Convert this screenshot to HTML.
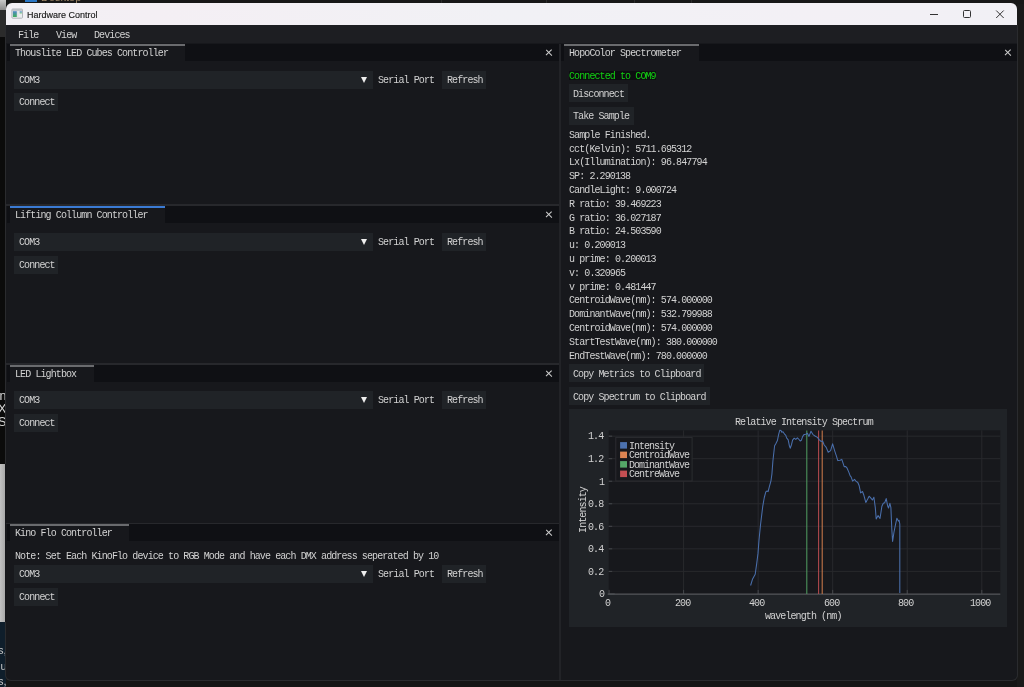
<!DOCTYPE html>
<html><head><meta charset="utf-8"><title>Hardware Control</title>
<style>
html,body{-webkit-font-smoothing:antialiased;margin:0;padding:0;width:1024px;height:687px;overflow:hidden;background:#151515}
body>div,#chart>div{position:absolute}
.m{will-change:transform;font-family:"Liberation Mono",monospace;font-size:10px;line-height:10px;letter-spacing:-0.9px;white-space:pre}
.s{will-change:transform;font-family:"Liberation Sans",sans-serif;white-space:pre}
.x{width:6.2px;height:6.2px}
.x::before,.x::after{content:"";position:absolute;left:-0.75px;top:2.3px;width:7.5px;height:1.35px;background:#d0d0d0;transform:rotate(45deg)}
.x::after{transform:rotate(-45deg)}
.arr{width:0;height:0;border-left:3.4px solid transparent;border-right:3.4px solid transparent;border-top:6px solid #eee}
svg{position:absolute;left:0;top:0}
</style></head><body>
<div style="left:0px;top:0px;width:1024.00px;height:687.00px;background:#151515;"></div>
<div style="left:0px;top:0px;width:6.00px;height:10.00px;background:linear-gradient(#c8c8c8,#8a8a8a);"></div>
<div style="left:0px;top:10px;width:6.00px;height:27.00px;background:#2b2b2b;"></div>
<div style="left:0px;top:37px;width:6.00px;height:427.00px;background:#0b0b0b;"></div>
<div style="left:0px;top:464px;width:6.00px;height:158.00px;background:linear-gradient(90deg,#c2c2c2,#a4a4a4);"></div>
<div style="left:0px;top:622px;width:6.00px;height:65.00px;background:#0f1e2b;"></div>
<div style="left:1017px;top:0px;width:7.00px;height:687.00px;background:#191919;"></div>
<div style="left:6px;top:0px;width:1018.00px;height:3.50px;background:#171717;"></div>
<div style="left:25px;top:0px;width:12.00px;height:2.40px;background:#2a76c4;"></div>
<div class="s" style="left:41px;top:-7.8px;font-size:11px;line-height:10px;color:#9a8566">Desktop</div>
<div style="left:441px;top:0px;width:1.00px;height:3.00px;background:#2a2a2a;"></div>
<div style="left:546px;top:0px;width:1.00px;height:3.00px;background:#2a2a2a;"></div>
<div style="left:634px;top:0px;width:1.00px;height:3.00px;background:#2a2a2a;"></div>
<div style="left:691px;top:0px;width:1.00px;height:3.00px;background:#2a2a2a;"></div>
<div style="left:0;top:385px;width:5.8px;height:50px;overflow:hidden"><div class="s" style="position:absolute;right:-0.5px;top:4.5px;font-size:12.5px;line-height:12.8px;color:#d6d6d6;text-align:right">n<br>X<br>S</div></div>
<div style="left:0;top:640px;width:5.8px;height:47px;overflow:hidden"><div class="s" style="position:absolute;right:-1px;top:3px;font-size:11px;line-height:15.5px;color:#c8c8c8;text-align:right">s,<br>u<br>s,</div></div>
<div style="left:5px;top:25px;width:1013.00px;height:656.00px;background:#2a2b2e;border-radius:0 0 6px 6px;"></div>
<div style="left:5px;top:464px;width:1.20px;height:158.00px;background:#15161a;"></div>
<div style="left:6px;top:25px;width:1011.00px;height:655.00px;background:#17181c;border-radius:0 0 5px 5px;"></div>
<div style="left:6px;top:3px;width:1011.00px;height:22.40px;background:linear-gradient(90deg,#f2f0f4 0%,#f4eff4 15%,#f1f1f5 50%,#f3f0f5 80%,#f1f0f5 100%);border-radius:6px 6px 0 0;"></div>
<div style="left:6px;top:25.4px;width:1011.00px;height:18.00px;background:#1d1e22;"></div>
<div class="m" style="left:18.1px;top:31.00px;color:#d2d2d2;">File</div>
<div class="m" style="left:55.6px;top:31.00px;color:#d2d2d2;">View</div>
<div class="m" style="left:93.9px;top:31.00px;color:#d2d2d2;">Devices</div>
<div style="left:559px;top:43.5px;width:2.00px;height:636.50px;background:#222327;"></div>
<div style="left:6.5px;top:44px;width:552.00px;height:17.00px;background:#0f1014;"></div>
<div style="left:10px;top:44px;width:175.00px;height:17.00px;background:#17181c;"></div>
<div style="left:10px;top:44px;width:175.00px;height:2.00px;background:#6a6b6e;"></div>
<div class="m" style="left:14.8px;top:49.00px;color:#d2d2d2;">Thouslite LED Cubes Controller</div>
<div class="x" style="left:546px;top:49.8px"></div>
<div style="left:14.2px;top:70.8px;width:358.50px;height:18.00px;background:#202327;"></div>
<div class="m" style="left:19.2px;top:76.00px;color:#d2d2d2;">COM3</div>
<div class="arr" style="left:360.6px;top:76.8px"></div>
<div class="m" style="left:377.8px;top:76.00px;color:#d2d2d2;">Serial Port</div>
<div style="left:442.2px;top:70.8px;width:44.00px;height:18.00px;background:#202327;"></div>
<div class="m" style="left:446.6px;top:76.00px;color:#d2d2d2;">Refresh</div>
<div style="left:14.2px;top:93px;width:44.30px;height:18.00px;background:#202327;"></div>
<div class="m" style="left:19.0px;top:98.20px;color:#d2d2d2;">Connect</div>
<div style="left:6px;top:204px;width:553.00px;height:2.00px;background:#27282c;"></div>
<div style="left:6.5px;top:206px;width:552.00px;height:17.00px;background:#0f1014;"></div>
<div style="left:10px;top:206px;width:155.00px;height:17.00px;background:#17181c;"></div>
<div style="left:10px;top:206px;width:155.00px;height:2.00px;background:#3b7bd4;"></div>
<div class="m" style="left:14.8px;top:211.00px;color:#d2d2d2;">Lifting Collumn Controller</div>
<div class="x" style="left:546px;top:211.8px"></div>
<div style="left:14.2px;top:233px;width:358.50px;height:18.00px;background:#202327;"></div>
<div class="m" style="left:19.2px;top:238.20px;color:#d2d2d2;">COM3</div>
<div class="arr" style="left:360.6px;top:239px"></div>
<div class="m" style="left:377.8px;top:238.20px;color:#d2d2d2;">Serial Port</div>
<div style="left:442.2px;top:233px;width:44.00px;height:18.00px;background:#202327;"></div>
<div class="m" style="left:446.6px;top:238.20px;color:#d2d2d2;">Refresh</div>
<div style="left:14.2px;top:255.5px;width:44.30px;height:18.00px;background:#202327;"></div>
<div class="m" style="left:19.0px;top:260.70px;color:#d2d2d2;">Connect</div>
<div style="left:6px;top:363px;width:553.00px;height:1.50px;background:#27282c;"></div>
<div style="left:6.5px;top:364.5px;width:552.00px;height:17.00px;background:#0f1014;"></div>
<div style="left:10px;top:364.5px;width:84.00px;height:17.00px;background:#17181c;"></div>
<div style="left:10px;top:364.5px;width:84.00px;height:2.00px;background:#6a6b6e;"></div>
<div class="m" style="left:14.8px;top:369.50px;color:#d2d2d2;">LED Lightbox</div>
<div class="x" style="left:546px;top:370.3px"></div>
<div style="left:14.2px;top:391px;width:358.50px;height:18.00px;background:#202327;"></div>
<div class="m" style="left:19.2px;top:396.20px;color:#d2d2d2;">COM3</div>
<div class="arr" style="left:360.6px;top:397px"></div>
<div class="m" style="left:377.8px;top:396.20px;color:#d2d2d2;">Serial Port</div>
<div style="left:442.2px;top:391px;width:44.00px;height:18.00px;background:#202327;"></div>
<div class="m" style="left:446.6px;top:396.20px;color:#d2d2d2;">Refresh</div>
<div style="left:14.2px;top:413.5px;width:44.30px;height:18.00px;background:#202327;"></div>
<div class="m" style="left:19.0px;top:418.70px;color:#d2d2d2;">Connect</div>
<div style="left:6px;top:522.5px;width:553.00px;height:1.50px;background:#27282c;"></div>
<div style="left:6.5px;top:524px;width:552.00px;height:17.00px;background:#0f1014;"></div>
<div style="left:10px;top:524px;width:119.40px;height:17.00px;background:#17181c;"></div>
<div style="left:10px;top:524px;width:119.40px;height:2.00px;background:#6a6b6e;"></div>
<div class="m" style="left:14.8px;top:529.00px;color:#d2d2d2;">Kino Flo Controller</div>
<div class="x" style="left:546px;top:529.8px"></div>
<div class="m" style="left:14.8px;top:551.60px;color:#d2d2d2;">Note: Set Each KinoFlo device to RGB Mode and have each DMX address seperated by 10</div>
<div style="left:14.2px;top:565.2px;width:358.50px;height:18.00px;background:#202327;"></div>
<div class="m" style="left:19.2px;top:570.40px;color:#d2d2d2;">COM3</div>
<div class="arr" style="left:360.6px;top:571.2px"></div>
<div class="m" style="left:377.8px;top:570.40px;color:#d2d2d2;">Serial Port</div>
<div style="left:442.2px;top:565.2px;width:44.00px;height:18.00px;background:#202327;"></div>
<div class="m" style="left:446.6px;top:570.40px;color:#d2d2d2;">Refresh</div>
<div style="left:14.2px;top:587.6px;width:44.30px;height:18.00px;background:#202327;"></div>
<div class="m" style="left:19.0px;top:592.80px;color:#d2d2d2;">Connect</div>
<div style="left:561px;top:44px;width:455.50px;height:17.00px;background:#0f1014;"></div>
<div style="left:564px;top:44px;width:135.00px;height:17.00px;background:#17181c;"></div>
<div style="left:564px;top:44px;width:135.00px;height:2.00px;background:#6a6b6e;"></div>
<div class="m" style="left:568.8px;top:49.00px;color:#d2d2d2;">HopoColor Spectrometer</div>
<div class="x" style="left:1004.5px;top:49.8px"></div>
<div style="left:568.8px;top:70.8px;width:86.90px;height:9.00px;background:#0d0e10;"></div>
<div class="m" style="left:568.8px;top:71.80px;color:#12d012;">Connected to COM9</div>
<div style="left:568.8px;top:84.3px;width:59.20px;height:17.90px;background:#202327;"></div>
<div class="m" style="left:573.4px;top:90.10px;color:#d2d2d2;">Disconnect</div>
<div style="left:568.8px;top:107px;width:64.80px;height:17.60px;background:#202327;"></div>
<div class="m" style="left:573.4px;top:112.40px;color:#d2d2d2;">Take Sample</div>
<div class="m" style="left:568.8px;top:130.80px;color:#d2d2d2;">Sample Finished.</div>
<div class="m" style="left:568.8px;top:144.60px;color:#d2d2d2;">cct(Kelvin): 5711.695312</div>
<div class="m" style="left:568.8px;top:158.40px;color:#d2d2d2;">Lx(Illumination): 96.847794</div>
<div class="m" style="left:568.8px;top:172.20px;color:#d2d2d2;">SP: 2.290138</div>
<div class="m" style="left:568.8px;top:186.00px;color:#d2d2d2;">CandleLight: 9.000724</div>
<div class="m" style="left:568.8px;top:199.80px;color:#d2d2d2;">R ratio: 39.469223</div>
<div class="m" style="left:568.8px;top:213.60px;color:#d2d2d2;">G ratio: 36.027187</div>
<div class="m" style="left:568.8px;top:227.40px;color:#d2d2d2;">B ratio: 24.503590</div>
<div class="m" style="left:568.8px;top:241.20px;color:#d2d2d2;">u: 0.200013</div>
<div class="m" style="left:568.8px;top:255.00px;color:#d2d2d2;">u prime: 0.200013</div>
<div class="m" style="left:568.8px;top:268.80px;color:#d2d2d2;">v: 0.320965</div>
<div class="m" style="left:568.8px;top:282.60px;color:#d2d2d2;">v prime: 0.481447</div>
<div class="m" style="left:568.8px;top:296.40px;color:#d2d2d2;">CentroidWave(nm): 574.000000</div>
<div class="m" style="left:568.8px;top:310.20px;color:#d2d2d2;">DominantWave(nm): 532.799988</div>
<div class="m" style="left:568.8px;top:324.00px;color:#d2d2d2;">CentroidWave(nm): 574.000000</div>
<div class="m" style="left:568.8px;top:337.80px;color:#d2d2d2;">StartTestWave(nm): 380.000000</div>
<div class="m" style="left:568.8px;top:351.60px;color:#d2d2d2;">EndTestWave(nm): 780.000000</div>
<div style="left:568.8px;top:364.3px;width:135.70px;height:17.50px;background:#202327;"></div>
<div class="m" style="left:573.4px;top:370.20px;color:#d2d2d2;">Copy Metrics to Clipboard</div>
<div style="left:568.8px;top:387px;width:141.00px;height:17.60px;background:#202327;"></div>
<div class="m" style="left:573.4px;top:392.90px;color:#d2d2d2;">Copy Spectrum to Clipboard</div>
<div style="left:568.8px;top:408.7px;width:438.30px;height:218.30px;background:#202327;"></div>
<svg width="1024" height="687" viewBox="0 0 1024 687">
<rect x="608.7" y="430.4" width="391.60" height="163.50" fill="#17181c"/>
<line x1="683.60" y1="430.4" x2="683.60" y2="593.9" stroke="#28292d" stroke-width="1"/>
<line x1="758.15" y1="430.4" x2="758.15" y2="593.9" stroke="#28292d" stroke-width="1"/>
<line x1="832.70" y1="430.4" x2="832.70" y2="593.9" stroke="#28292d" stroke-width="1"/>
<line x1="907.25" y1="430.4" x2="907.25" y2="593.9" stroke="#28292d" stroke-width="1"/>
<line x1="981.80" y1="430.4" x2="981.80" y2="593.9" stroke="#28292d" stroke-width="1"/>
<line x1="608.7" y1="571.37" x2="1000.3" y2="571.37" stroke="#28292d" stroke-width="1"/>
<line x1="608.7" y1="548.83" x2="1000.3" y2="548.83" stroke="#28292d" stroke-width="1"/>
<line x1="608.7" y1="526.30" x2="1000.3" y2="526.30" stroke="#28292d" stroke-width="1"/>
<line x1="608.7" y1="503.76" x2="1000.3" y2="503.76" stroke="#28292d" stroke-width="1"/>
<line x1="608.7" y1="481.23" x2="1000.3" y2="481.23" stroke="#28292d" stroke-width="1"/>
<line x1="608.7" y1="458.70" x2="1000.3" y2="458.70" stroke="#28292d" stroke-width="1"/>
<line x1="608.7" y1="436.16" x2="1000.3" y2="436.16" stroke="#28292d" stroke-width="1"/>
<line x1="608.7" y1="593.90" x2="614.7" y2="593.90" stroke="#45474b" stroke-width="1"/>
<line x1="608.7" y1="571.37" x2="612.2" y2="571.37" stroke="#45474b" stroke-width="1"/>
<line x1="608.7" y1="548.83" x2="612.2" y2="548.83" stroke="#45474b" stroke-width="1"/>
<line x1="608.7" y1="526.30" x2="612.2" y2="526.30" stroke="#45474b" stroke-width="1"/>
<line x1="608.7" y1="503.76" x2="612.2" y2="503.76" stroke="#45474b" stroke-width="1"/>
<line x1="608.7" y1="481.23" x2="612.2" y2="481.23" stroke="#45474b" stroke-width="1"/>
<line x1="608.7" y1="458.70" x2="612.2" y2="458.70" stroke="#45474b" stroke-width="1"/>
<line x1="608.7" y1="436.16" x2="612.2" y2="436.16" stroke="#45474b" stroke-width="1"/>
<line x1="609.05" y1="589.9" x2="609.05" y2="593.9" stroke="#45474b" stroke-width="1"/>
<line x1="683.60" y1="589.9" x2="683.60" y2="593.9" stroke="#45474b" stroke-width="1"/>
<line x1="758.15" y1="589.9" x2="758.15" y2="593.9" stroke="#45474b" stroke-width="1"/>
<line x1="832.70" y1="589.9" x2="832.70" y2="593.9" stroke="#45474b" stroke-width="1"/>
<line x1="907.25" y1="589.9" x2="907.25" y2="593.9" stroke="#45474b" stroke-width="1"/>
<line x1="981.80" y1="589.9" x2="981.80" y2="593.9" stroke="#45474b" stroke-width="1"/>
<line x1="607.7" y1="594.1999999999999" x2="1000.3" y2="594.1999999999999" stroke="#55575b" stroke-width="1.2"/>
<line x1="806.8" y1="430.4" x2="806.8" y2="593.9" stroke="#4f9a60" stroke-width="1.05"/>
<line x1="818.6" y1="430.4" x2="818.6" y2="593.9" stroke="#b44a4e" stroke-width="1.05"/>
<line x1="822.2" y1="430.4" x2="822.2" y2="593.9" stroke="#cc7a4c" stroke-width="1.05"/>
<polyline points="750.6,585.5 752.6,578.9 755.2,574.3 756.7,563.6 758.0,553.4 759.0,540 760.5,525 762.7,506.7 764.3,497.5 765.8,491.9 766.8,491.1 768.1,491.6 769.3,486.8 770.9,481.2 771.9,474.1 772.9,461 774.6,445.8 775.8,443.8 777.4,440.6 778.6,434.6 779.8,430.2 781.0,430.6 781.8,432.2 783.0,431.8 784.6,434.2 785.8,435.4 786.6,437.8 788.2,439.8 789.4,445.8 790.2,448.2 791.4,445 792.6,440.2 794.2,438.2 795.8,439.4 797.4,437.8 798.6,439 800.2,441 801.4,440.2 802.6,436.6 804.2,434.4 805.8,434.2 807.4,433.2 809.0,436.4 811.0,431.3 813.0,434.6 815.4,436.2 817.4,437.4 819.4,439.8 821.0,441.4 822.6,441 824.2,445 826.2,447.4 828.2,452.2 830.6,450.6 832.6,443.8 834.6,450.6 836.2,455.4 837.8,460.6 840.2,460.2 841.8,459.4 844.2,466.6 845.8,466.6 846.9,467.8 848.8,472.1 850.2,475.9 851.1,476.8 852.6,481.1 854.5,479.4 855.9,481.1 857.8,482.5 859.2,485.8 860.6,492.9 862.5,491.5 863.9,495.3 865.8,502.4 867.7,499.1 869.1,496.2 870.5,497.6 872.4,500 873.9,497.2 875.3,507.6 876.2,518.9 878.1,515.6 880.0,518.5 881.9,506.2 883.3,503.3 884.7,502.8 886.2,498.6 887.6,505.7 888.5,508 889.9,503.3 890.9,507.6 891.8,529.1 892.6,541.5 894.0,532 895.5,524.7 896.9,518.2 898.4,521.1 899.1,520.4 899.8,524 899.8,593" fill="none" stroke="#4a6fac" stroke-width="1.05" stroke-linejoin="round"/>
<rect x="615.8" y="437.4" width="76.3" height="43.6" fill="#17181c" stroke="#2c2d31" stroke-width="1"/>
<rect x="620.1" y="442.10" width="6.9" height="6.5" fill="#4c72b0"/>
<rect x="620.1" y="451.60" width="6.9" height="6.5" fill="#dd8452"/>
<rect x="620.1" y="461.10" width="6.9" height="6.5" fill="#55a868"/>
<rect x="620.1" y="470.60" width="6.9" height="6.5" fill="#c44e52"/>
</svg>
<div class="m" style="left:629.2px;top:441.60px;color:#d2d2d2;letter-spacing:-1px">Intensity</div><div class="m" style="left:629.2px;top:451.10px;color:#d2d2d2;letter-spacing:-1px">CentroidWave</div><div class="m" style="left:629.2px;top:460.60px;color:#d2d2d2;letter-spacing:-1px">DominantWave</div><div class="m" style="left:629.2px;top:470.10px;color:#d2d2d2;letter-spacing:-1px">CentreWave</div><div class="m" style="left:735.4px;top:417.60px;color:#d2d2d2;">Relative Intensity Spectrum</div><div class="m" style="left:765.1px;top:612.20px;color:#d2d2d2;">wavelength (nm)</div><div class="m" style="left:605.3px;top:599.20px;color:#d2d2d2;">0</div><div class="m" style="left:674.7499999999999px;top:599.20px;color:#d2d2d2;">200</div><div class="m" style="left:749.3px;top:599.20px;color:#d2d2d2;">400</div><div class="m" style="left:823.8499999999999px;top:599.20px;color:#d2d2d2;">600</div><div class="m" style="left:898.4px;top:599.20px;color:#d2d2d2;">800</div><div class="m" style="left:970.3999999999999px;top:599.20px;color:#d2d2d2;">1000</div><div class="m" style="left:598.5px;top:590.20px;color:#d2d2d2;">0</div><div class="m" style="left:588.3000000000001px;top:567.67px;color:#d2d2d2;">0.2</div><div class="m" style="left:588.3000000000001px;top:545.13px;color:#d2d2d2;">0.4</div><div class="m" style="left:588.3000000000001px;top:522.60px;color:#d2d2d2;">0.6</div><div class="m" style="left:588.3000000000001px;top:500.06px;color:#d2d2d2;">0.8</div><div class="m" style="left:598.5px;top:477.53px;color:#d2d2d2;">1</div><div class="m" style="left:588.3000000000001px;top:455.00px;color:#d2d2d2;">1.2</div><div class="m" style="left:588.3000000000001px;top:432.46px;color:#d2d2d2;">1.4</div><div class="m" style="left:558px;top:506px;width:50px;text-align:center;color:#d2d2d2;transform:rotate(-90deg);transform-origin:25px 4px">Intensity</div>
<div class="s" style="left:26.6px;top:9.5px;font-size:9px;line-height:10px;color:#1a1a1a;-webkit-text-stroke:0.15px #1a1a1a">Hardware Control</div>
<svg width="1024" height="30" viewBox="0 0 1024 30" style="position:absolute;left:0;top:0"><defs><linearGradient id="ig" x1="0" y1="0" x2="0" y2="1"><stop offset="0" stop-color="#4f86c8"/><stop offset="1" stop-color="#3fae5a"/></linearGradient><linearGradient id="ig2" x1="0" y1="0" x2="0" y2="1"><stop offset="0" stop-color="#6a9ad8"/><stop offset="1" stop-color="#8fd090"/></linearGradient></defs>
<rect x="11.9" y="9.0" width="10.6" height="9.2" rx="0.8" fill="#e9ecee" stroke="#a9adb2" stroke-width="0.9"/>
<rect x="12.3" y="9.4" width="9.8" height="1.3" fill="#b4b8bc"/>
<rect x="12.9" y="11.2" width="3.9" height="5.8" fill="url(#ig)"/>
<rect x="19.6" y="11.2" width="2.3" height="2.4" fill="url(#ig2)"/>
<rect x="17.6" y="11.2" width="0.6" height="5.8" fill="#d0d4d6"/>
</svg>
<div style="left:930px;top:14px;width:7.5px;height:1px;background:#333"></div>
<div style="left:963px;top:10.3px;width:6px;height:6px;border:1px solid #333;border-radius:1.5px"></div>
<svg width="1024" height="30" viewBox="0 0 1024 30" style="position:absolute;left:0;top:0"><path d="M996.2 10.5 L1003.7 18 M1003.7 10.5 L996.2 18" stroke="#333" stroke-width="1"/></svg>
</body></html>
